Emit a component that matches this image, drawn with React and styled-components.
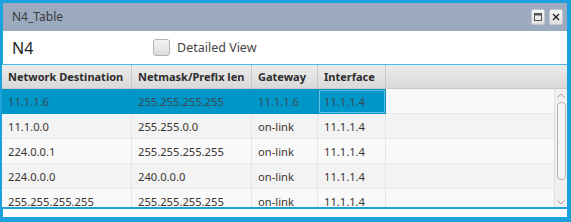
import React from 'react';
import styled, { createGlobalStyle } from 'styled-components';

const GlobalStyle = createGlobalStyle`
  html, body { margin: 0; padding: 0; background: #1ba1dc; }
  body { font-family: "Noto Sans", "Open Sans", sans-serif; }
`;

const Window = styled.div`
  width: 571px;
  height: 222px;
  box-sizing: border-box;
  border-style: solid;
  border-color: #1ba1dc;
  border-width: 3px 4px 5px 3px;
  display: flex;
  flex-direction: column;
  background: #fff;
`;

const TitleBar = styled.div`
  height: 28px;
  background: #9caac0;
  display: flex;
  align-items: center;
  padding: 0 4px 0 9px;
  color: #3a3a3a;
  font-size: 12px;
`;

const Title = styled.span`
  flex: 1;
  margin-top: -2px;
`;

const WinButton = styled.div`
  width: 14px;
  height: 16px;
  margin-left: 4px;
  box-sizing: border-box;
  border: 1px solid #c4c8cf;
  border-radius: 2px;
  background: linear-gradient(#f6f6f6, #dedede);
  display: flex;
  align-items: center;
  justify-content: center;
`;

const Toolbar = styled.div`
  height: 33px;
  display: flex;
  align-items: center;
  padding-left: 9px;
`;

const NodeName = styled.span`
  font-size: 16px;
  color: #222;
  width: 141px;
`;

const CheckLabel = styled.label`
  display: flex;
  align-items: center;
  font-size: 12.5px;
  color: #444;
`;

const CheckBox = styled.span`
  width: 17px;
  height: 17px;
  box-sizing: border-box;
  border: 1px solid #b4b4b4;
  border-radius: 3px;
  background: linear-gradient(#f4f4f4, #dcdcdc);
  margin-right: 7px;
`;

const TableBox = styled.div`
  border-top: 1px solid #4db6e4;
  border-bottom: 2px solid #1ba1dc;
  margin-left: -1px;
  height: 142px;
  display: flex;
  flex-direction: column;
  overflow: hidden;
`;

const cols = [130, 120, 66, 68];

const HeaderRow = styled.div`
  display: flex;
  height: 23px;
  flex: none;
  background: linear-gradient(#ececec, #d9d9d9);
  border-bottom: 1px solid #c8c8c8;
`;

const HeaderCell = styled.div`
  width: ${p => p.$w}px;
  flex: ${p => (p.$w ? 'none' : 1)};
  box-sizing: border-box;
  border-right: ${p => (p.$last ? 'none' : '1px solid #c8c8c8')};
  font-weight: bold;
  font-size: 11px;
  color: #2c2c2c;
  display: flex;
  align-items: center;
  padding-left: 6px;
  white-space: nowrap;
`;

const Body = styled.div`
  flex: 1;
  display: flex;
  min-height: 0;
`;

const Rows = styled.div`
  flex: 1;
`;

const Row = styled.div`
  display: flex;
  height: 25px;
  background: ${p => (p.$odd ? '#f3f3f3' : '#f9f9f9')};
`;

const Cell = styled.div`
  width: ${p => p.$w}px;
  flex: ${p => (p.$w ? 'none' : 1)};
  box-sizing: border-box;
  background: ${p => (p.$sel ? '#0096c8' : 'transparent')};
  border-right: ${p => (p.$filler ? 'none' : `1px solid ${p.$sel ? '#0b8cbc' : '#e6e6e6'}`)};
  border-bottom: 1px solid ${p => (p.$sel ? '#0096c8' : '#e9e9e9')};
  font-size: 11.2px;
  color: ${p => (p.$sel ? '#3c4a50' : '#3a3530')};
  display: flex;
  align-items: center;
  padding-left: 6px;
  white-space: nowrap;
  outline: ${p => (p.$focus ? '1px solid #5fc0e6' : 'none')};
  outline-offset: -2px;
`;

const ScrollBar = styled.div`
  width: 12px;
  background: #f0f0f0;
  border-left: 1px solid #e0e0e0;
  display: flex;
  flex-direction: column;
  align-items: center;
  padding-top: 2px;
`;

const Arrow = styled.div`
  height: 9px;
  display: flex;
  align-items: center;
  justify-content: center;
`;

const Thumb = styled.div`
  width: 9px;
  height: 78px;
  margin-top: 2px;
  box-sizing: border-box;
  border: 1px solid #b4b4b4;
  border-radius: 4px;
  background: #f6f6f6;
`;

const Spacer = styled.div`
  flex: 1;
`;

const rows = [
  ['11.1.1.6', '255.255.255.255', '11.1.1.6', '11.1.1.4'],
  ['11.1.0.0', '255.255.0.0', 'on-link', '11.1.1.4'],
  ['224.0.0.1', '255.255.255.255', 'on-link', '11.1.1.4'],
  ['224.0.0.0', '240.0.0.0', 'on-link', '11.1.1.4'],
  ['255.255.255.255', '255.255.255.255', 'on-link', '11.1.1.4'],
];

export default function App() {
  return (
    <>
      <GlobalStyle />
      <Window>
        <TitleBar>
          <Title>N4_Table</Title>
          <WinButton>
            <svg width="8" height="8" viewBox="0 0 8 8">
              <rect x="0.5" y="0.5" width="7" height="7" fill="none" stroke="#555" />
              <rect x="0.5" y="0.5" width="7" height="2" fill="#555" />
            </svg>
          </WinButton>
          <WinButton>
            <svg width="8" height="8" viewBox="0 0 8 8">
              <path d="M1 1 L7 7 M7 1 L1 7" stroke="#222" strokeWidth="1.4" />
            </svg>
          </WinButton>
        </TitleBar>
        <Toolbar>
          <NodeName>N4</NodeName>
          <CheckLabel>
            <CheckBox />
            Detailed View
          </CheckLabel>
        </Toolbar>
        <TableBox>
          <HeaderRow>
            <HeaderCell $w={cols[0]}>Network Destination</HeaderCell>
            <HeaderCell $w={cols[1]}>Netmask/Prefix len</HeaderCell>
            <HeaderCell $w={cols[2]}>Gateway</HeaderCell>
            <HeaderCell $w={cols[3]}>Interface</HeaderCell>
            <HeaderCell $last />
          </HeaderRow>
          <Body>
            <Rows>
              {rows.map((r, i) => (
                <Row key={i} $odd={i % 2 === 1}>
                  {r.map((c, j) => (
                    <Cell key={j} $w={cols[j]} $sel={i === 0} $focus={i === 0 && j === 3}>
                      {c}
                    </Cell>
                  ))}
                  <Cell $filler />
                </Row>
              ))}
            </Rows>
            <ScrollBar>
              <Arrow>
                <svg width="8" height="5" viewBox="0 0 8 5">
                  <path d="M0.5 4.5 L4 1 L7.5 4.5" fill="none" stroke="#999" />
                </svg>
              </Arrow>
              <Thumb />
              <Spacer />
              <Arrow>
                <svg width="8" height="5" viewBox="0 0 8 5">
                  <path d="M0.5 0.5 L4 4 L7.5 0.5" fill="none" stroke="#999" />
                </svg>
              </Arrow>
            </ScrollBar>
          </Body>
        </TableBox>
      </Window>
    </>
  );
}
